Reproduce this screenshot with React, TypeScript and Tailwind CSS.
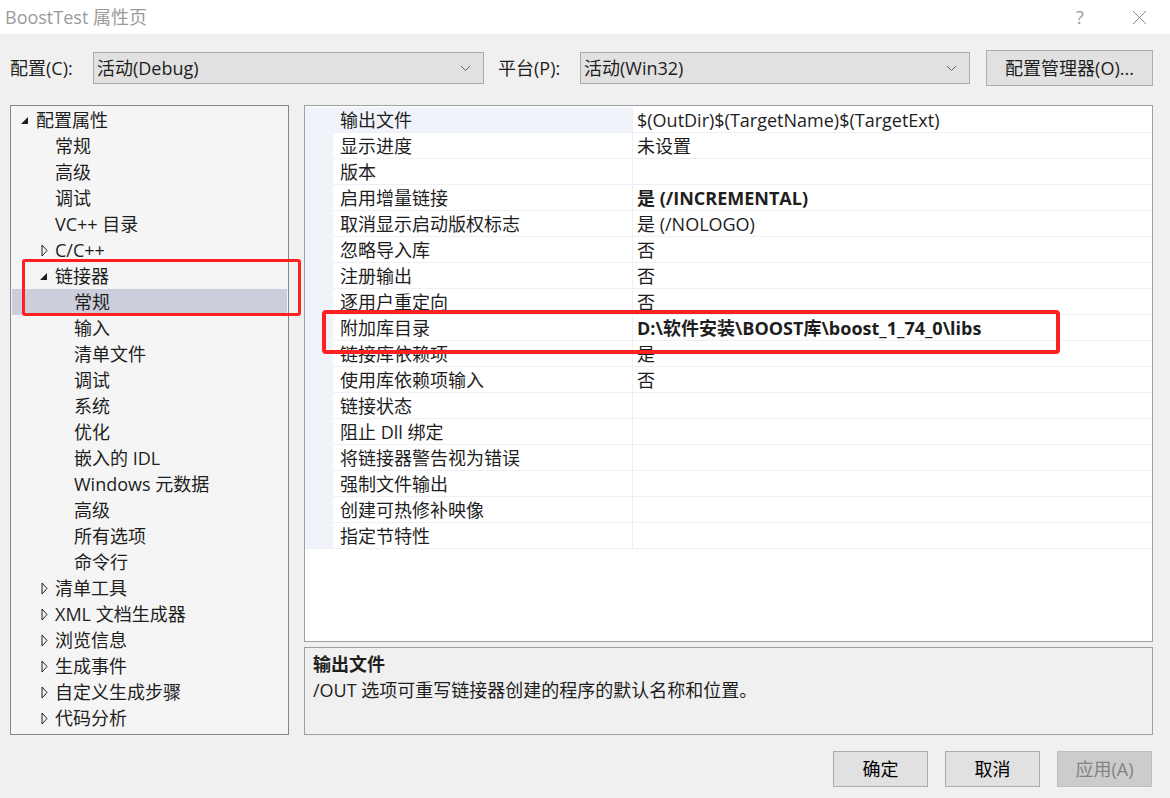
import React from "react";

const FONT = { fontFamily: '"Open Sans", "Noto Sans CJK SC", sans-serif' };

type TreeItem = { label: string; level: 0 | 1 | 2; arrow?: "open" | "closed"; selected?: boolean };

const TREE: TreeItem[] = [
  { label: "配置属性", level: 0, arrow: "open" },
  { label: "常规", level: 1 },
  { label: "高级", level: 1 },
  { label: "调试", level: 1 },
  { label: "VC++ 目录", level: 1 },
  { label: "C/C++", level: 1, arrow: "closed" },
  { label: "链接器", level: 1, arrow: "open" },
  { label: "常规", level: 2, selected: true },
  { label: "输入", level: 2 },
  { label: "清单文件", level: 2 },
  { label: "调试", level: 2 },
  { label: "系统", level: 2 },
  { label: "优化", level: 2 },
  { label: "嵌入的 IDL", level: 2 },
  { label: "Windows 元数据", level: 2 },
  { label: "高级", level: 2 },
  { label: "所有选项", level: 2 },
  { label: "命令行", level: 2 },
  { label: "清单工具", level: 1, arrow: "closed" },
  { label: "XML 文档生成器", level: 1, arrow: "closed" },
  { label: "浏览信息", level: 1, arrow: "closed" },
  { label: "生成事件", level: 1, arrow: "closed" },
  { label: "自定义生成步骤", level: 1, arrow: "closed" },
  { label: "代码分析", level: 1, arrow: "closed" },
];

type Prop = { name: string; value?: string; bold?: boolean };

const PROPS: Prop[] = [
  { name: "输出文件", value: "$(OutDir)$(TargetName)$(TargetExt)" },
  { name: "显示进度", value: "未设置" },
  { name: "版本" },
  { name: "启用增量链接", value: "是 (/INCREMENTAL)", bold: true },
  { name: "取消显示启动版权标志", value: "是 (/NOLOGO)" },
  { name: "忽略导入库", value: "否" },
  { name: "注册输出", value: "否" },
  { name: "逐用户重定向", value: "否" },
  { name: "附加库目录", value: "D:\\软件安装\\BOOST库\\boost_1_74_0\\libs", bold: true },
  { name: "链接库依赖项", value: "是" },
  { name: "使用库依赖项输入", value: "否" },
  { name: "链接状态" },
  { name: "阻止 Dll 绑定" },
  { name: "将链接器警告视为错误" },
  { name: "强制文件输出" },
  { name: "创建可热修补映像" },
  { name: "指定节特性" },
];

function Chevron() {
  return (
    <svg width="11" height="7" viewBox="0 0 11 7" fill="none" aria-hidden>
      <path d="M1 1l4.5 4.5L10 1" stroke="#606060" strokeWidth="1" />
    </svg>
  );
}

function Arrow({ kind }: { kind: "open" | "closed" }) {
  if (kind === "open") {
    return (
      <svg width="9" height="9" viewBox="0 0 9 9" aria-hidden>
        <path d="M8 1v7H1z" fill="#1e1e1e" />
      </svg>
    );
  }
  return (
    <svg width="7" height="13" viewBox="0 0 7 13" aria-hidden>
      <path d="M1 1l5 5.5L1 12z" fill="none" stroke="#1e1e1e" strokeWidth="1" />
    </svg>
  );
}

function Combo({ text, width }: { text: string; width: string }) {
  return (
    <div className={`flex h-[32px] items-center justify-between border border-[#adadad] bg-[#e1e1e1] pl-[3px] pr-[12px] ${width}`}>
      <span>{text}</span>
      <Chevron />
    </div>
  );
}

function Button({ children, disabled }: { children: React.ReactNode; disabled?: boolean }) {
  return (
    <div
      className={`flex h-[36px] w-[95px] items-center justify-center border ${
        disabled ? "border-[#bfbfbf] bg-[#cccccc] text-[#838383]" : "border-[#adadad] bg-[#e1e1e1] text-black"
      }`}
    >
      {children}
    </div>
  );
}

export default function App() {
  return (
    <div className="h-[798px] w-[1170px] overflow-hidden bg-[#f0f0f0] text-[18px] leading-[26px] text-[#1e1e1e]" style={FONT}>
      {/* Title bar */}
      <div className="flex h-[34px] items-center justify-between bg-white pl-[5px]">
        <span className="text-[#9a9a9a]">BoostTest 属性页</span>
        <div className="flex items-center">
          <span className="w-[60px] text-center text-[#9a9a9a]">?</span>
          <div className="flex w-[60px] items-center justify-center pr-[2px]">
            <svg width="15" height="15" viewBox="0 0 15 15" aria-hidden>
              <path d="M1 1l13 13M14 1L1 14" stroke="#8a8a8a" strokeWidth="1" />
            </svg>
          </div>
        </div>
      </div>

      {/* Configuration / platform */}
      <div className="mt-[16px] flex h-[36px] items-center pl-[10px]">
        <span className="w-[83px]">配置(C):</span>
        <Combo text="活动(Debug)" width="w-[391px]" />
        <span className="ml-[14px] w-[82px]">平台(P):</span>
        <Combo text="活动(Win32)" width="w-[390px]" />
        <div className="ml-[16px] flex h-[36px] w-[167px] items-center justify-center border border-[#adadad] bg-[#e1e1e1]">
          配置管理器(O)...
        </div>
      </div>

      {/* Main area */}
      <div className="mt-[19px] flex h-[630px] pl-[10px]">
        {/* Tree */}
        <div className="relative h-[630px] w-[279px] border border-[#828790] bg-[#f5f5f5] pt-[1px]">
          {TREE.map((item, i) => (
            <div
              key={i}
              className={`flex h-[26px] items-center ${item.selected ? "mx-[1px] bg-[#cccedb]" : ""}`}
            >
              <div
                className={`flex shrink-0 items-center justify-end pr-[7px] ${
                  item.level === 0 ? "w-[25px]" : item.level === 1 ? "w-[44px]" : "w-[63px]"
                } ${item.selected ? "-ml-[1px]" : ""}`}
              >
                {item.arrow && <Arrow kind={item.arrow} />}
              </div>
              <span className="whitespace-nowrap">{item.label}</span>
            </div>
          ))}
          {/* annotation box */}
          <div className="pointer-events-none absolute left-[11px] top-[153px] h-[57px] w-[279px] rounded-[3px] border-[3px] border-[#ff2121]" />
        </div>

        <div className="ml-[15px] flex w-[849px] flex-col">
          {/* Property grid */}
          <div className="relative h-[537px] border border-[#a0a0a0] bg-white pt-[1px]">
            {PROPS.map((p, i) => (
              <div key={i} className="flex h-[26px]">
                <div className="w-[28px] shrink-0 bg-[#f0f4fa]" />
                <div
                  className={`flex w-[300px] shrink-0 items-center border-b border-r border-[#eef0f5] pl-[7px] ${
                    i === 0 ? "bg-[#f0f4fa]" : ""
                  }`}
                >
                  <span className="whitespace-nowrap">{p.name}</span>
                </div>
                <div className="flex flex-1 items-center border-b border-[#eef0f5] pl-[4px]">
                  <span className={`whitespace-nowrap ${p.bold ? "font-bold" : ""}`}>{p.value}</span>
                </div>
              </div>
            ))}
            {/* annotation box */}
            <div className="pointer-events-none absolute left-[17px] top-[204px] h-[44px] w-[738px] rounded-[4px] border-[4px] border-[#ff2121]" />
          </div>

          {/* Description */}
          <div className="mt-[5px] h-[88px] border border-[#a0a0a0] bg-[#f0f0f0] pl-[8px] pt-[3px]">
            <div className="font-bold">输出文件</div>
            <div>/OUT 选项可重写链接器创建的程序的默认名称和位置。</div>
          </div>
        </div>
      </div>

      {/* Buttons */}
      <div className="mt-[16px] flex justify-end gap-[17px] pr-[18px]">
        <Button>确定</Button>
        <Button>取消</Button>
        <Button disabled>应用(A)</Button>
      </div>
    </div>
  );
}
